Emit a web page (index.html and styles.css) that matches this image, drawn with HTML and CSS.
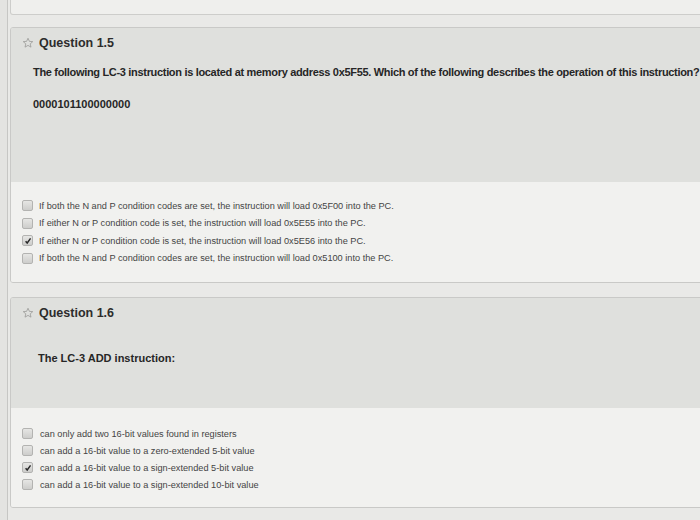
FILE: index.html
```html
<!DOCTYPE html>
<html>
<head>
<meta charset="utf-8">
<link rel="stylesheet" href="styles.css">
</head>
<body>
<div class="wrap">
  <div class="prev"></div>

  <div class="card">
    <div class="head">
      <div class="title">
        <svg class="star" viewBox="0 0 24 24" width="12" height="12"><path d="M12 2.5l2.8 6.2 6.7.6-5.1 4.4 1.6 6.6L12 16.8l-6 3.5 1.6-6.6-5.1-4.4 6.7-.6z" fill="none" stroke="#9a9a98" stroke-width="1.6" stroke-linejoin="round"/></svg>
        <span>Question 1.5</span>
      </div>
      <p class="q q1">The following LC-3 instruction is located at memory address 0x5F55. Which of the following describes the operation of this instruction?</p>
      <p class="code">0000101100000000</p>
    </div>
    <div class="body body1">
      <div class="opt"><span class="cb"></span><span>If both the N and P condition codes are set, the instruction will load 0x5F00 into the PC.</span></div>
      <div class="opt"><span class="cb"></span><span>If either N or P condition code is set, the instruction will load 0x5E55 into the PC.</span></div>
      <div class="opt"><span class="cb on"><svg viewBox="0 0 10 10" width="8" height="8"><path d="M2 5.2l2 2.3L8.2 1.8" fill="none" stroke="#2a2a2a" stroke-width="1.8"/></svg></span><span>If either N or P condition code is set, the instruction will load 0x5E56 into the PC.</span></div>
      <div class="opt"><span class="cb"></span><span>If both the N and P condition codes are set, the instruction will load 0x5100 into the PC.</span></div>
    </div>
  </div>

  <div class="card card2">
    <div class="head head2">
      <div class="title">
        <svg class="star" viewBox="0 0 24 24" width="12" height="12"><path d="M12 2.5l2.8 6.2 6.7.6-5.1 4.4 1.6 6.6L12 16.8l-6 3.5 1.6-6.6-5.1-4.4 6.7-.6z" fill="none" stroke="#9a9a98" stroke-width="1.6" stroke-linejoin="round"/></svg>
        <span>Question 1.6</span>
      </div>
      <p class="q q2">The LC-3 ADD instruction:</p>
    </div>
    <div class="body body2">
      <div class="opt"><span class="cb"></span><span>can only add two 16-bit values found in registers</span></div>
      <div class="opt"><span class="cb"></span><span>can add a 16-bit value to a zero-extended 5-bit value</span></div>
      <div class="opt"><span class="cb on"><svg viewBox="0 0 10 10" width="8" height="8"><path d="M2 5.2l2 2.3L8.2 1.8" fill="none" stroke="#2a2a2a" stroke-width="1.8"/></svg></span><span>can add a 16-bit value to a sign-extended 5-bit value</span></div>
      <div class="opt"><span class="cb"></span><span>can add a 16-bit value to a sign-extended 10-bit value</span></div>
    </div>
  </div>
</div>
</body>
</html>
```

FILE: styles.css
```css
html, body {
  margin: 0;
  padding: 0;
  background: #e3e3e1;
  overflow: hidden;
}
body {
  font-family: "Liberation Sans", Arial, sans-serif;
  color: #2a2a2a;
  width: 700px;
  height: 520px;
}
.wrap {
  margin-left: 7px;
  border-left: 1px solid #c6c6c4;
  padding-left: 2px;
  height: 520px;
  background: #e9e9e7;
}
.prev {
  height: 14px;
  background: #efefed;
  border: 1px solid #cdcdcb;
  border-top: none;
  border-radius: 0 0 3px 3px;
  margin-right: -10px;
}
.card {
  margin-top: 12px;
  margin-right: -10px;
  border: 1px solid #c9c9c7;
  border-radius: 3px;
  overflow: hidden;
}
.card2 {
  margin-top: 14px;
}
.head {
  background: #dfe0dd;
  padding: 8px 10px 71px 11px;
}
.head2 {
  padding-bottom: 43px;
}
.title {
  display: flex;
  align-items: center;
  gap: 5px;
  height: 14px;
  font-size: 12.5px;
  font-weight: bold;
  color: #2c2c2c;
}
.star {
  display: block;
  flex: none;
}
.q {
  margin: 0;
  font-size: 11px;
  font-weight: bold;
  line-height: 14px;
  white-space: nowrap;
  color: #262626;
}
.q1 {
  margin: 15px 0 0 11px;
  letter-spacing: -0.32px;
}
.q2 {
  margin: 31px 0 0 16px;
}
.code {
  margin: 18px 0 0 11px;
  font-size: 11px;
  font-weight: bold;
  line-height: 14px;
  color: #262626;
}
.body {
  background: #f1f1ef;
  padding: 15px 10px 15px 11px;
}
.body2 {
  padding: 17px 10px 14px 11px;
}
.opt {
  display: flex;
  align-items: center;
  gap: 6px;
  height: 17.5px;
  font-size: 9.2px;
  color: #444;
  white-space: nowrap;
}
.body2 .opt {
  height: 17px;
  gap: 7px;
  font-size: 9.2px;
}
.cb {
  flex: none;
  width: 9px;
  height: 9px;
  border: 1px solid #b3b3b1;
  border-radius: 2px;
  background: linear-gradient(#e6e6e4, #cdcdcb);
  display: flex;
  align-items: center;
  justify-content: center;
}
.cb svg {
  display: block;
}
```
